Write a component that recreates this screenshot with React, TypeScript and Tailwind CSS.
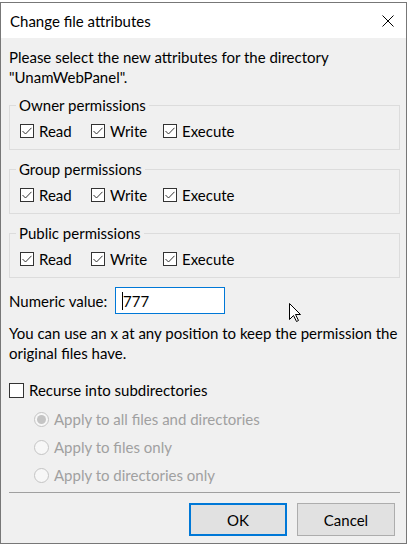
import { ReactNode } from 'react'

function CheckBox({ checked, size = 14 }: { checked: boolean; size?: number }) {
  return (
    <span
      className="flex shrink-0 items-center justify-center border border-[#333333] bg-white"
      style={{ width: size, height: size }}
    >
      {checked && (
        <svg width="10" height="8" viewBox="0 0 10 8" fill="none">
          <path d="M0.5 4 L3.5 7 L9.5 0.8" stroke="#333333" strokeWidth="1" />
        </svg>
      )}
    </span>
  )
}

function Perm({ label, width }: { label: string; width?: string }) {
  return (
    <div className={`flex items-center gap-[5px] ${width ?? ''}`}>
      <CheckBox checked />
      <span>{label}</span>
    </div>
  )
}

function Group({ title, first }: { title: string; first?: boolean }) {
  return (
    <fieldset className={`border border-[#dcdcdc] ${first ? 'mt-[8px]' : 'mt-[9px]'}`}>
      <legend className="ml-[6px] px-[3px]">{title}</legend>
      <div className="mt-[6px] mb-[8px] flex h-[20px] items-center pl-[10px]">
        <Perm label="Read" width="w-[71px]" />
        <Perm label="Write" width="w-[72px]" />
        <Perm label="Execute" />
      </div>
    </fieldset>
  )
}

function Radio({ selected, children }: { selected?: boolean; children: ReactNode }) {
  return (
    <div className="flex h-[20px] items-center gap-[5px] text-[#a0a0a0]">
      <span className="flex h-[15px] w-[15px] items-center justify-center rounded-full border border-[#c4c4c4] bg-[#f7f7f7]">
        {selected && <span className="h-[9px] w-[9px] rounded-full bg-[#c4c4c4]" />}
      </span>
      <span>{children}</span>
    </div>
  )
}

export default function App() {
  return (
    <div className="relative h-[546px] w-[409px] overflow-hidden bg-white font-['Lato',sans-serif] text-[15px] leading-[20px] text-black">
      <div className="mt-[2px] flex h-[542px] w-[407px] flex-col border border-[#777777] bg-[#f0f0f0]">
        <div className="flex h-[35px] shrink-0 items-center justify-between bg-white pl-[9px] pr-[12px]">
          <span>Change file attributes</span>
          <svg width="12" height="12" viewBox="0 0 12 12">
            <path d="M0.5 0.5 L11.5 11.5 M11.5 0.5 L0.5 11.5" stroke="#000000" strokeWidth="1" />
          </svg>
        </div>

        <div className="flex flex-1 flex-col pl-[8px] pr-[6px] pt-[9px]">
          <p>
            Please select the new attributes for the directory
            <br />
            "UnamWebPanel".
          </p>

          <Group title="Owner permissions" first />
          <Group title="Group permissions" />
          <Group title="Public permissions" />

          <div className="mt-[9px] flex h-[27px] items-center">
            <span className="w-[106px]">Numeric value:</span>
            <div className="flex h-[27px] w-[110px] items-center border border-[#0078d7] bg-white pl-[6px]">
              <span className="h-[18px] w-px bg-black" />
              <span>777</span>
            </div>
          </div>

          <p className="mt-[9px]">
            You can use an x at any position to keep the permission the
            <br />
            original files have.
          </p>

          <div className="mt-[17px] flex h-[20px] items-center gap-[5px]">
            <CheckBox checked={false} size={15} />
            <span>Recurse into subdirectories</span>
          </div>

          <div className="mt-[9px] flex flex-col gap-[8px] pl-[25px]">
            <Radio selected>Apply to all files and directories</Radio>
            <Radio>Apply to files only</Radio>
            <Radio>Apply to directories only</Radio>
          </div>

          <div className="mt-[7px] h-px bg-[#a0a0a0]" />

          <div className="mt-[10px] flex justify-end gap-[10px] pr-[5px]">
            <button className="h-[33px] w-[98px] border-2 border-[#0078d7] bg-[#e1e1e1]">OK</button>
            <button className="h-[33px] w-[98px] border border-[#adadad] bg-[#e1e1e1]">Cancel</button>
          </div>
        </div>
      </div>

      <svg className="absolute left-[289px] top-[303px]" width="13" height="20" viewBox="0 0 13 20">
        <path d="M0.5 0.5 V16.5 L4.5 12.5 L7.5 18.5 L9.5 17.5 L6.5 11.5 H11.5 Z" fill="#ffffff" stroke="#000000" strokeWidth="1" />
      </svg>
    </div>
  )
}
